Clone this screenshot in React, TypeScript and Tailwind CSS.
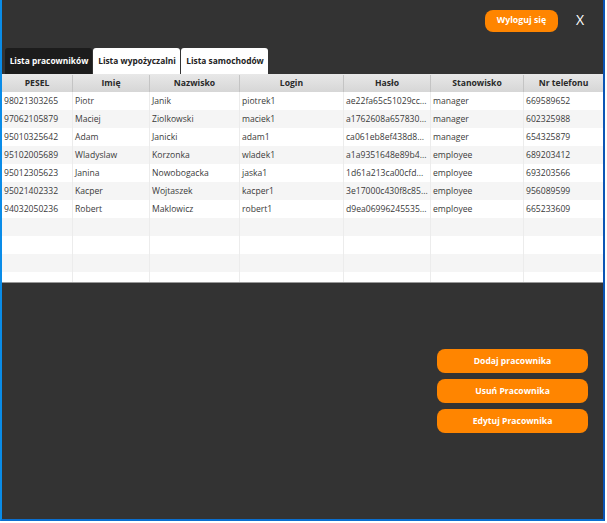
const columns = [
  { name: "PESEL", width: "w-[71px]" },
  { name: "Imię", width: "w-[77px]" },
  { name: "Nazwisko", width: "w-[90px]" },
  { name: "Login", width: "w-[104px]" },
  { name: "Hasło", width: "w-[87px]" },
  { name: "Stanowisko", width: "w-[93px]" },
  { name: "Nr telefonu", width: "w-[80px]" },
];

const rows = [
  ["98021303265", "Piotr", "Janik", "piotrek1", "ae22fa65c51029cc...", "manager", "669589652"],
  ["97062105879", "Maciej", "Ziolkowski", "maciek1", "a1762608a657830...", "manager", "602325988"],
  ["95010325642", "Adam", "Janicki", "adam1", "ca061eb8ef438d8...", "manager", "654325879"],
  ["95102005689", "Wladyslaw", "Korzonka", "wladek1", "a1a9351648e89b4...", "employee", "689203412"],
  ["95012305623", "Janina", "Nowobogacka", "jaska1", "1d61a213ca00cfd...", "employee", "693203566"],
  ["95021402332", "Kacper", "Wojtaszek", "kacper1", "3e17000c430f8c85...", "employee", "956089599"],
  ["94032050236", "Robert", "Maklowicz", "robert1", "d9ea06996245535...", "employee", "665233609"],
  ["", "", "", "", "", "", ""],
  ["", "", "", "", "", "", ""],
  ["", "", "", "", "", "", ""],
  ["", "", "", "", "", "", ""],
];

const actions = ["Dodaj pracownika", "Usuń Pracownika", "Edytuj Pracownika"];

export default function App() {
  return (
    <div className="h-[523px] w-[607px] overflow-hidden bg-white font-['Open_Sans','Noto_Sans',sans-serif]">
      <div className="flex h-[521px] w-[605px] flex-col border-r-2 border-b-2 border-l-2 border-r-[#0b55b5] border-b-[#0a6fd0] border-l-[#0a8ce8] bg-[#333333]">
        <div className="flex h-[48px] items-start justify-end pt-[10px]">
          <button className="h-[22px] w-[73px] rounded-lg bg-[#ff8500] text-[8.75px] font-bold text-white">Wyloguj się</button>
          <span className="mr-[19px] ml-[18px] text-[14px] leading-[20px] text-white">X</span>
        </div>
        <div className="flex h-[26px] gap-px pl-[3px]">
          <div className="flex w-[87px] items-center justify-center rounded-t-[3px] bg-[#1c1c1c] pl-px text-[8.4px] font-bold whitespace-nowrap text-white">Lista pracowników</div>
          <div className="flex w-[87px] items-center justify-center rounded-t-[3px] bg-white pl-px text-[8.4px] font-bold whitespace-nowrap text-[#222222]">Lista wypożyczalni</div>
          <div className="flex w-[87px] items-center justify-center rounded-t-[3px] bg-white pl-px text-[8.4px] font-bold whitespace-nowrap text-[#222222]">Lista samochodów</div>
        </div>
        <div className="h-[209px] w-[601px] overflow-hidden border-b border-[#999999] bg-white text-[8.6px] text-[#3a3a3a]">
          <div className="flex h-[18px] bg-gradient-to-b from-[#e8e8e8] to-[#d6d6d6] pt-px font-bold text-[#2a2a2a]">
            {columns.map((c) => (
              <div key={c.name} className={`${c.width} flex shrink-0 items-center justify-center border-r border-[#c4c4c4]`}>{c.name}</div>
            ))}
          </div>
          {rows.map((row, i) => (
            <div key={i} className={`flex h-[18px] ${i % 2 === 0 ? "bg-white" : "bg-[#f5f5f5]"}`}>
              {row.map((cell, j) => (
                <div key={j} className={`${columns[j].width} flex shrink-0 items-center overflow-hidden border-r border-[#ececec] pl-[2px] whitespace-nowrap`}>{cell}</div>
              ))}
            </div>
          ))}
        </div>
        <div className="mt-[66px] flex flex-col items-end gap-[6px] pr-[15px]">
          {actions.map((label) => (
            <button key={label} className="h-[24px] w-[151px] rounded-lg bg-[#ff8500] text-[8.6px] font-bold text-white">{label}</button>
          ))}
        </div>
      </div>
    </div>
  );
}
